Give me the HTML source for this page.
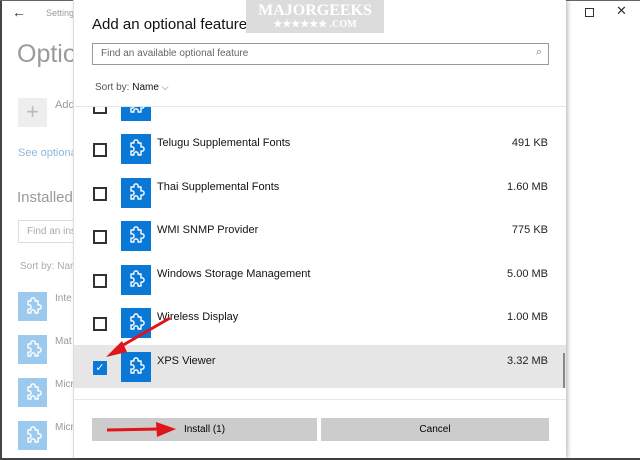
<!DOCTYPE html>
<html><head><meta charset="utf-8"><style>
*{margin:0;padding:0;box-sizing:border-box}
body{width:640px;height:460px;overflow:hidden;background:#fff;font-family:"Liberation Sans",sans-serif;position:relative;color:#000}
.a{position:absolute}
.bg{color:#9a9a9a}
.lic{position:absolute;left:18px;width:29px;height:29px;background:#9ccaee}
.dlg{position:absolute;left:73px;top:0;width:493px;height:458px;background:#fff;box-shadow:2px 0 4px rgba(0,0,0,.25);border-left:1px solid #ddd}
.row{position:absolute;left:0;width:492px;height:43px}
.cb{position:absolute;left:19px;width:14px;height:14px;border:2px solid #333}
.ic{position:absolute;left:47px;width:30px;height:30px;background:#0a78d6}
.ic svg,.lic svg{position:absolute;left:0;top:0}
.nm{position:absolute;left:83px;font-size:11px;color:#111}
.sz{position:absolute;right:18px;font-size:11px;color:#222}
</style></head><body>
<svg width="0" height="0" style="position:absolute"><defs><g id="pz"><path d="M10,9 h3 a2.2,2.2 0 1 1 4,0 h3 v4 a2.2,2.2 0 1 1 0,4 v4 h-3 a2.2,2.2 0 1 0 -4,0 h-3 v-4 a2.2,2.2 0 1 0 0,-4 z" fill="none" stroke="#fff" stroke-width="1.4" stroke-linejoin="round"/></g></defs></svg>
<div class="a" style="left:0;top:0;width:2px;height:460px;background:#444"></div>
<div class="a" style="left:0;top:458px;width:640px;height:2px;background:#444"></div>
<div class="a" style="left:0;top:0;width:640px;height:1px;background:#666"></div>
<div class="a bg" style="left:12px;top:4px;font-size:14px;color:#333">←</div>
<div class="a bg" style="left:46px;top:8px;font-size:9px">Settings</div>
<div class="a bg" style="left:17px;top:40px;font-size:25px">Optional</div>
<div class="a" style="left:18px;top:98px;width:29px;height:29px;background:#eee;color:#bbb;font-size:22px;text-align:center;line-height:27px">+</div>
<div class="a bg" style="left:55px;top:99px;font-size:11px">Add</div>
<div class="a" style="left:18px;top:147px;font-size:11px;color:#8fb8dd">See optional</div>
<div class="a bg" style="left:17px;top:189px;font-size:15px">Installed</div>
<div class="a" style="left:18px;top:220px;width:70px;height:23px;border:1px solid #ddd;font-size:10px;color:#aaa;padding:5px 8px">Find an ins</div>
<div class="a" style="left:20px;top:261px;font-size:10px;color:#aaa">Sort by: Nar</div>
<div class="lic" style="top:292px"><svg width="29" height="29"><use href="#pz"/></svg></div><div class="a bg" style="left:55px;top:293px;font-size:10px">Inte</div>
<div class="lic" style="top:335px"><svg width="29" height="29"><use href="#pz"/></svg></div><div class="a bg" style="left:55px;top:336px;font-size:10px">Mat</div>
<div class="lic" style="top:378px"><svg width="29" height="29"><use href="#pz"/></svg></div><div class="a bg" style="left:55px;top:379px;font-size:10px">Micr</div>
<div class="lic" style="top:421px"><svg width="29" height="29"><use href="#pz"/></svg></div><div class="a bg" style="left:55px;top:422px;font-size:10px">Micr</div>
<div class="a" style="left:551px;top:12px;width:9px;height:1px;background:#333"></div>
<div class="a" style="left:585px;top:8px;width:9px;height:9px;border:1px solid #333"></div>
<div class="a" style="left:616px;top:3px;font-size:13px;color:#333">✕</div>

<div class="dlg">
<div class="a" style="left:18px;top:16px;font-size:15px;color:#111">Add an optional feature</div>
<div class="a" style="left:172px;top:0;width:138px;height:33px;background:#dcdcdc;color:#fff;font-family:'Liberation Serif',serif;font-weight:bold;font-size:16px;text-align:center;line-height:18px;padding-top:2px">MAJORGEEKS<div style="font-size:10px;line-height:10px">★★★★★★ .COM</div></div>
<div class="a" style="left:18px;top:43px;width:457px;height:22px;border:1px solid #999;font-size:10px;color:#666;padding:4px 8px">Find an available optional feature<span style="position:absolute;right:6px;top:2px;font-size:11px;color:#777">⌕</span></div>
<div class="a" style="left:21px;top:82px;font-size:10px;color:#555">Sort by: <span style="color:#111">Name</span> <span style="font-size:9px">⌵</span></div>
<div class="a" style="left:0;top:106px;width:492px;height:1px;background:#e6e6e6"></div>
<div style="position:absolute;left:0;top:107px;width:492px;height:292px;overflow:hidden">
<div class="row" style="top:-23px"><div class="cb" style="top:16px"></div><div class="ic" style="top:7px"><svg width="30" height="30"><use href="#pz"/></svg></div></div>
<div class="row" style="top:20px"><div class="cb" style="top:16px"></div><div class="ic" style="top:7px"><svg width="30" height="30"><use href="#pz"/></svg></div><div class="nm" style="top:10px">Telugu Supplemental Fonts</div><div class="sz" style="top:10px">491 KB</div></div>
<div class="row" style="top:64px"><div class="cb" style="top:16px"></div><div class="ic" style="top:7px"><svg width="30" height="30"><use href="#pz"/></svg></div><div class="nm" style="top:10px">Thai Supplemental Fonts</div><div class="sz" style="top:10px">1.60 MB</div></div>
<div class="row" style="top:107px"><div class="cb" style="top:16px"></div><div class="ic" style="top:7px"><svg width="30" height="30"><use href="#pz"/></svg></div><div class="nm" style="top:10px">WMI SNMP Provider</div><div class="sz" style="top:10px">775 KB</div></div>
<div class="row" style="top:151px"><div class="cb" style="top:16px"></div><div class="ic" style="top:7px"><svg width="30" height="30"><use href="#pz"/></svg></div><div class="nm" style="top:10px">Windows Storage Management</div><div class="sz" style="top:10px">5.00 MB</div></div>
<div class="row" style="top:194px"><div class="cb" style="top:16px"></div><div class="ic" style="top:7px"><svg width="30" height="30"><use href="#pz"/></svg></div><div class="nm" style="top:10px">Wireless Display</div><div class="sz" style="top:10px">1.00 MB</div></div>
<div class="row" style="top:238px;background:#e6e6e6"><div class="cb" style="top:16px;background:#0a78d6;border-color:#0a78d6;color:#fff;font-size:11px;line-height:10px;text-align:center">✓</div><div class="ic" style="top:7px"><svg width="30" height="30"><use href="#pz"/></svg></div><div class="nm" style="top:10px">XPS Viewer</div><div class="sz" style="top:10px">3.32 MB</div><div class="a" style="left:489px;top:8px;width:2px;height:35px;background:#888"></div></div>
</div>
<div class="a" style="left:0;top:399px;width:492px;height:1px;background:#e6e6e6"></div>
<div class="a" style="left:18px;top:418px;width:225px;height:23px;background:#ccc;font-size:10px;text-align:center;line-height:23px">Install (1)</div>
<div class="a" style="left:247px;top:418px;width:228px;height:23px;background:#ccc;font-size:10px;text-align:center;line-height:23px">Cancel</div>
</div>
<svg class="a" style="left:0;top:0" width="640" height="460">
<path d="M170,318 L118,348" stroke="#e0141b" stroke-width="3"/><polygon points="106,357 122,341 127,352" fill="#e0141b"/>
<path d="M107,430 L160,429" stroke="#e0141b" stroke-width="3"/><polygon points="176,429 156,422 157,437" fill="#e0141b"/>
</svg>
</body></html>
